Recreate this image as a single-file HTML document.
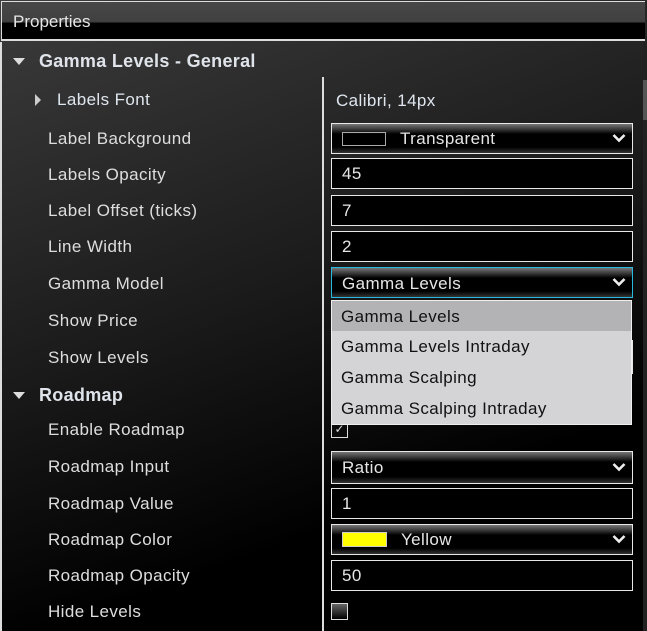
<!DOCTYPE html><html><head><style>
body{margin:0;width:647px;height:631px;overflow:hidden;font-family:"Liberation Sans",Arial,sans-serif;background:#000}
.w{position:absolute;left:0;top:0;width:647px;height:631px;background:linear-gradient(160deg,#3c3c3c 0%,#1a1a1a 45%,#000 75%)}
.t{position:absolute;left:1px;top:1px;width:644px;height:40px;background:linear-gradient(#474747 0,#404040 20px,#000 21px,#000);border-top:1px solid #ddd;border-left:1px solid #ddd;border-bottom:2px solid #ddd;color:#e6e6e6;font-size:17px;padding-left:10px;box-sizing:border-box}
.t span{position:absolute;top:10px;left:11px}
.l{position:absolute;color:#dedede;font-size:17px;left:48px;letter-spacing:0.4px}
.h{position:absolute;color:#dfe4ea;font-size:18px;font-weight:bold;left:39px;letter-spacing:0.3px}
.tri{position:absolute;left:13px;width:0;height:0;border-left:6px solid transparent;border-right:6px solid transparent;border-top:7px solid #ddd}
.b{position:absolute;left:331px;width:302px;border:1px solid #e8e8e8;background:#000;box-sizing:border-box;color:#e6e6e6;font-size:17px;padding-left:10px;letter-spacing:0.4px}
.g{background:linear-gradient(#777 0,#000 10px,#000 80%,#333)}
.ch{position:absolute;right:6px;top:9px}
.it{height:31px;line-height:31px;padding-left:9px;color:#111;font-size:17px;letter-spacing:0.4px}
</style></head><body><div class="w">
<div class="t"><span>Properties</span></div>
<div style="position:absolute;left:0;top:42px;width:2px;height:589px;background:#ddd"></div>
<div style="position:absolute;left:322px;top:77px;width:2px;height:554px;background:#ddd"></div>
<div style="position:absolute;left:643px;top:43px;width:4px;height:588px;background:#222"></div>
<div style="position:absolute;left:643px;top:80px;width:4px;height:40px;background:#555"></div>
<div class="tri" style="top:58px"></div><div class="h" style="top:51px">Gamma Levels - General</div>
<div style="position:absolute;left:35px;top:94px;border-top:6px solid transparent;border-bottom:6px solid transparent;border-left:6px solid #ccc"></div>
<div class="l" style="left:57px;top:90px;color:#dfe6ee">Labels Font</div>
<div class="l" style="left:336px;top:91px;color:#dfe6ee">Calibri, 14px</div>
<div class="l" style="top:129px">Label Background</div>
<div class="l" style="top:165px">Labels Opacity</div>
<div class="l" style="top:201px">Label Offset (ticks)</div>
<div class="l" style="top:237px">Line Width</div>
<div class="l" style="top:274px">Gamma Model</div>
<div class="l" style="top:311px">Show Price</div>
<div class="l" style="top:348px">Show Levels</div>
<div class="tri" style="top:392px"></div><div class="h" style="top:385px">Roadmap</div>
<div class="l" style="top:420px">Enable Roadmap</div>
<div class="l" style="top:457px">Roadmap Input</div>
<div class="l" style="top:494px">Roadmap Value</div>
<div class="l" style="top:530px">Roadmap Color</div>
<div class="l" style="top:566px">Roadmap Opacity</div>
<div class="l" style="top:602px">Hide Levels</div>

<svg width="0" height="0" style="position:absolute"><defs><symbol id="c" viewBox="0 0 14 10"><path d="M1.5 2 L7 7.5 L12.5 2" stroke="#eee" stroke-width="2.6" fill="none"/></symbol></defs></svg>

<div class="b g" style="top:123px;height:31px;line-height:29px"><span style="display:inline-block;width:42px;height:12px;border:1px solid #aaa;vertical-align:-2px;margin-right:14px"></span>Transparent<svg class="ch" width="14" height="10"><use href="#c"/></svg></div>
<div class="b" style="top:158px;height:31px;line-height:29px">45</div>
<div class="b" style="top:195px;height:31px;line-height:29px">7</div>
<div class="b" style="top:231px;height:31px;line-height:29px">2</div>
<div class="b g" style="top:267px;height:31px;line-height:31px;border-color:#29b8e0">Gamma Levels<svg class="ch" width="14" height="10"><use href="#c"/></svg></div>
<div class="b" style="top:340px;height:34px"></div>
<div style="position:absolute;left:331px;top:300px;width:301px;height:125px;background:#d4d4d6;border:1px solid #eee;box-sizing:border-box">
<div class="it" style="background:#b3b3b5;height:30px">Gamma Levels</div>
<div class="it">Gamma Levels Intraday</div>
<div class="it">Gamma Scalping</div>
<div class="it">Gamma Scalping Intraday</div></div>
<div style="position:absolute;left:331px;top:425px;width:17px;height:13px;border:1px solid #ddd;border-top:none;box-sizing:border-box;color:#ddd;font-size:12px;line-height:8px;text-align:center">✓</div>
<div class="b g" style="top:451px;height:33px;line-height:31px">Ratio<svg class="ch" width="14" height="10" style="top:10px"><use href="#c"/></svg></div>
<div class="b" style="top:488px;height:31px;line-height:29px">1</div>
<div class="b g" style="top:524px;height:31px;line-height:29px"><span style="display:inline-block;width:43px;height:13px;background:#ff0;border:1px solid #ccc;vertical-align:-2px;margin-right:14px"></span>Yellow<svg class="ch" width="14" height="10"><use href="#c"/></svg></div>
<div class="b" style="top:560px;height:31px;line-height:29px">50</div>
<div style="position:absolute;left:331px;top:603px;width:17px;height:17px;border:1px solid #ddd;box-sizing:border-box;background:linear-gradient(#666,#000)"></div>
</div></body></html>
